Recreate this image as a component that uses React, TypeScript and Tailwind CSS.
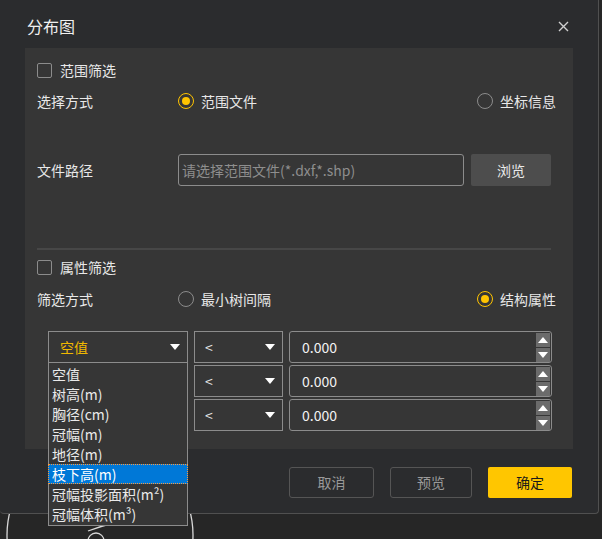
import React from 'react';

const font = { fontFamily: '"Noto Sans CJK SC", "Noto Sans", sans-serif' };

const fields = ['空值', '树高(m)', '胸径(cm)', '冠幅(m)', '地径(m)', '枝下高(m)', '冠幅投影面积(m²)', '冠幅体积(m³)'];

function CheckBox({ label }: { label: string }) {
  return (
    <div className="flex items-center h-[20px]">
      <span className="w-[15px] h-[15px] border border-[#8c8c8c] rounded-[2px]" />
      <span className="ml-[8px] text-[14px] text-[#e8e8e8]">{label}</span>
    </div>
  );
}

function Radio({ label, checked }: { label: string; checked?: boolean }) {
  return (
    <div className="flex items-center">
      <span
        className={
          checked
            ? 'w-[16px] h-[16px] rounded-full border-[1.5px] border-[#ffc400] flex items-center justify-center'
            : 'w-[16px] h-[16px] rounded-full border-[1.5px] border-[#8c8c8c]'
        }
      >
        {checked && <span className="w-[8px] h-[8px] rounded-full bg-[#ffc400]" />}
      </span>
      <span className="ml-[7px] text-[14px] text-[#e8e8e8]">{label}</span>
    </div>
  );
}

function Caret() {
  return (
    <svg width="10" height="6" viewBox="0 0 10 6">
      <path d="M0 0 L10 0 L5 6 Z" fill="#ffffff" />
    </svg>
  );
}

function Spinner() {
  return (
    <div className="flex flex-col gap-[1px] mr-[1px]">
      <div className="w-[14px] h-[14px] bg-[#6b6b6b] flex items-center justify-center">
        <svg width="10" height="6" viewBox="0 0 10 6">
          <path d="M0 6 L10 6 L5 0 Z" fill="#ffffff" />
        </svg>
      </div>
      <div className="w-[14px] h-[14px] bg-[#6b6b6b] flex items-center justify-center">
        <svg width="10" height="6" viewBox="0 0 10 6">
          <path d="M0 0 L10 0 L5 6 Z" fill="#ffffff" />
        </svg>
      </div>
    </div>
  );
}

function ConditionRow({ first }: { first?: boolean }) {
  return (
    <div className="flex h-[32px]">
      <div className="relative w-[140px]">
        {first && (
          <div className="h-full border border-[#8c8c8c] flex items-center justify-between pl-[11px] pr-[7px]">
            <span className="text-[14px] text-[#f0b800]">空值</span>
            <Caret />
          </div>
        )}
        {first && (
          <div className="absolute left-0 top-[31px] w-[140px] z-10 bg-[#363636] border border-[#8c8c8c] py-[1px]">
            {fields.map(f => (
              <div
                key={f}
                className={
                  f === '枝下高(m)'
                    ? 'h-[20px] leading-[19px] px-[3px] text-[14px] text-white bg-[#0078d7] border border-dotted border-[#ff9a3c] -mx-[1px]'
                    : 'h-[20px] leading-[20px] px-[3px] text-[14px] text-[#eaeaea]'
                }
              >
                {f}
              </div>
            ))}
          </div>
        )}
      </div>
      <div className="ml-[6px] w-[89px] border border-[#8c8c8c] flex items-center justify-between pl-[10px] pr-[7px]">
        <span className="text-[14px] text-[#e8e8e8]">&lt;</span>
        <Caret />
      </div>
      <div className="ml-[6px] w-[263px] border border-[#8c8c8c] rounded-[3px] flex items-center justify-between pl-[12px]">
        <span className="text-[14px] text-[#f2f2f2]">0.000</span>
        <Spinner />
      </div>
    </div>
  );
}

export default function App() {
  return (
    <div className="relative w-[602px] h-[539px] bg-[#262626] overflow-hidden" style={font}>
      <svg className="absolute left-0 top-0" width="602" height="539" viewBox="0 0 602 539">
        <circle cx="100" cy="535" r="93" fill="none" stroke="#d8d8d8" strokeWidth="1.3" />
        <path d="M88 531 Q140 512 196 512" fill="none" stroke="#d8d8d8" strokeWidth="1.3" />
        <circle cx="96" cy="541" r="8" fill="none" stroke="#d8d8d8" strokeWidth="1.3" />
      </svg>

      <div className="relative w-[599px] h-[514px] bg-[#2b2c2e] border-r border-b border-[#505050] rounded-br-[4px] rounded-bl-[4px]">
        {/* title */}
        <div className="h-[48px] flex items-center justify-between pl-[27px] pr-[29px] pt-[4px]">
          <span className="text-[16px] text-[#f0f0f0]">分布图</span>
          <svg width="11" height="11" viewBox="0 0 11 11">
            <path d="M1 1 L10 10 M10 1 L1 10" stroke="#d0d0d0" strokeWidth="1.4" />
          </svg>
        </div>

        {/* panel */}
        <div className="ml-[25px] w-[548px] h-[401px] bg-[#363636] px-[12px] pt-[12px]">
          <CheckBox label="范围筛选" />
          <div className="flex items-center h-[22px] mt-[10px]">
            <span className="w-[141px] text-[14px] text-[#e8e8e8]">选择方式</span>
            <Radio label="范围文件" checked />
            <div className="ml-auto mr-[5px]">
              <Radio label="坐标信息" />
            </div>
          </div>
          <div className="flex items-center h-[32px] mt-[42px]">
            <span className="w-[141px] text-[14px] text-[#e8e8e8]">文件路径</span>
            <div className="w-[286px] h-[32px] border border-[#8c8c8c] rounded-[3px] flex items-center pl-[3px]">
              <span className="text-[14px] text-[#8e8e8e]">请选择范围文件(*.dxf,*.shp)</span>
            </div>
            <div className="ml-[7px] w-[80px] h-[32px] bg-[#4d4d4d] rounded-[2px] flex items-center justify-center">
              <span className="text-[14px] text-[#eaeaea]">浏览</span>
            </div>
          </div>
          <div className="h-[2px] bg-[#474747] mt-[62px] mr-[10px]" />
          <div className="mt-[7px]">
            <CheckBox label="属性筛选" />
          </div>
          <div className="flex items-center h-[22px] mt-[11px]">
            <span className="w-[141px] text-[14px] text-[#e8e8e8]">筛选方式</span>
            <Radio label="最小树间隔" />
            <div className="ml-auto mr-[5px]">
              <Radio label="结构属性" checked />
            </div>
          </div>
          <div className="ml-[11px] mt-[21px] flex flex-col gap-[2px]">
            <ConditionRow first />
            <ConditionRow />
            <ConditionRow />
          </div>
        </div>

        {/* buttons */}
        <div className="flex justify-end gap-[16px] mt-[18px] mr-[26px]">
          <div className="w-[85px] h-[31px] border border-[#555] rounded-[3px] flex items-center justify-center text-[14px] text-[#9a9a9a]">
            取消
          </div>
          <div className="w-[82px] h-[31px] border border-[#555] rounded-[3px] flex items-center justify-center text-[14px] text-[#9a9a9a]">
            预览
          </div>
          <div className="w-[84px] h-[31px] bg-[#ffc600] rounded-[2px] flex items-center justify-center text-[14px] text-[#1a1a1a]">
            确定
          </div>
        </div>
      </div>
    </div>
  );
}
